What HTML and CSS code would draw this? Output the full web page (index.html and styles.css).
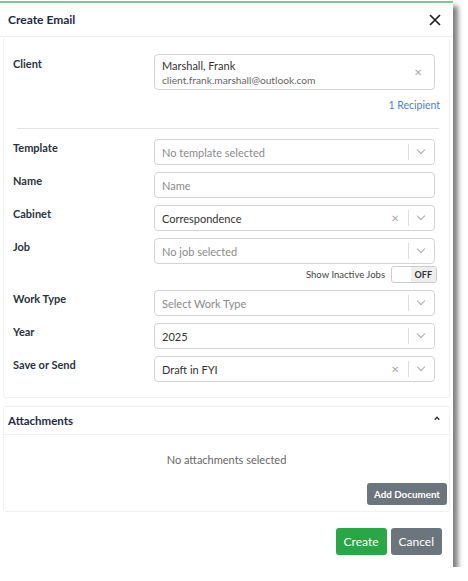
FILE: index.html
```html
<!DOCTYPE html>
<html lang="en">
<head>
    <meta charset="UTF-8">
    <title>Create Email</title>
    <link rel="stylesheet" href="styles.css">
</head>
<body>
    <div class="dialog">
        <header class="head">
            <h1>Create Email</h1>
            <span class="close">
                <svg width="12" height="12" viewBox="0 0 12 12"><path d="M1 1L11 11M11 1L1 11" stroke="#222" stroke-width="1.7"/></svg>
            </span>
        </header>

        <section class="card form">
            <div class="row client-row">
                <label>Client</label>
                <div class="field">
                    <div class="box client">
                        <div>
                            <div class="val">Marshall, Frank</div>
                            <div class="mail">client.frank.marshall@outlook.com</div>
                        </div>
                        <span class="x">&#x2715;</span>
                    </div>
                    <div class="recip">1 Recipient</div>
                </div>
            </div>
            <hr>
            <div class="row">
                <label>Template</label>
                <div class="box select"><span class="ph">No template selected</span><span class="ctl"><i class="sep"></i><i class="chev"></i></span></div>
            </div>
            <div class="row">
                <label>Name</label>
                <div class="box"><span class="ph">Name</span></div>
            </div>
            <div class="row">
                <label>Cabinet</label>
                <div class="box select"><span class="val">Correspondence</span><span class="ctl"><span class="x">&#x2715;</span><i class="sep"></i><i class="chev"></i></span></div>
            </div>
            <div class="row">
                <label>Job</label>
                <div class="field">
                    <div class="box select"><span class="ph">No job selected</span><span class="ctl"><i class="sep"></i><i class="chev"></i></span></div>
                    <div class="inactive">Show Inactive Jobs <span class="toggle"><span></span><b>OFF</b></span></div>
                </div>
            </div>
            <div class="row">
                <label>Work Type</label>
                <div class="box select"><span class="ph">Select Work Type</span><span class="ctl"><i class="sep"></i><i class="chev"></i></span></div>
            </div>
            <div class="row">
                <label>Year</label>
                <div class="box select"><span class="val">2025</span><span class="ctl"><i class="sep"></i><i class="chev"></i></span></div>
            </div>
            <div class="row">
                <label>Save or Send</label>
                <div class="box select"><span class="val">Draft in FYI</span><span class="ctl"><span class="x">&#x2715;</span><i class="sep"></i><i class="chev"></i></span></div>
            </div>
        </section>

        <section class="card attach">
            <div class="attach-head">
                <h2>Attachments</h2>
                <svg class="caret" width="6" height="5" viewBox="0 0 6 5"><path d="M0.7 3.8L3 1.3L5.3 3.8" fill="none" stroke="#333" stroke-width="1.4"/></svg>
            </div>
            <div class="attach-body">
                <p>No attachments selected</p>
                <div class="attach-foot"><button class="btn grey small">Add Document</button></div>
            </div>
        </section>

        <footer class="foot">
            <button class="btn green">Create</button>
            <button class="btn grey">Cancel</button>
        </footer>
    </div>
</body>
</html>
```

FILE: styles.css
```css
*{
    margin: 0;
    padding: 0;
    box-sizing: border-box;
}
body
{
    background: #fff;
    font-family: Lato, "Open Sans", sans-serif;
    font-size: 11px;
    color: #333;
}
.dialog
{
    width: 453px;
    margin-top: 1px;
    background: #fff;
    border-top: 2px solid #7cc796;
    box-shadow: 5px 5px 5px rgba(0, 0, 0, 0.5);
    padding-bottom: 12px;
}
.head
{
    height: 34px;
    display: flex;
    align-items: center;
    justify-content: space-between;
    padding: 0 10px 0 8px;
    border-bottom: 1px solid #eee;
}
h1, h2
{
    font-size: 12px;
    font-weight: 700;
    color: #1f2b45;
}
h2
{
    font-size: 11.5px;
}
.close
{
    display: flex;
    margin-right: 2px;
}
.card
{
    margin: 0 3px;
    border: 1px solid #f0f0f0;
    border-top: none;
    border-radius: 3px;
}
.form
{
    padding: 17px 14px 15px 9px;
    display: flex;
    flex-direction: column;
    gap: 7px;
}
.row
{
    display: grid;
    grid-template-columns: 141px 1fr;
}
.row label
{
    font-weight: 700;
    font-size: 11px;
    color: #2c3340;
    padding-top: 2px;
}
.client-row label
{
    padding-top: 3px;
}
.box
{
    height: 26px;
    border: 1px solid #d3d3d3;
    border-radius: 4px;
    display: flex;
    align-items: center;
    justify-content: space-between;
    padding: 0 0 0 7px;
}
.client
{
    height: 36px;
    padding: 0 12px 0 7px;
}
.client .val
{
    line-height: 15px;
}
.mail
{
    color: #666;
    font-size: 10.2px;
    line-height: 14px;
}
.ph
{
    color: #8a8a8a;
}
.x
{
    color: #aaa;
    font-size: 10px;
}
.ctl
{
    display: flex;
    align-items: center;
    height: 100%;
}
.ctl .x
{
    margin-right: 9px;
}
.sep
{
    width: 1px;
    height: 16px;
    background: #ddd;
}
.chev
{
    width: 6px;
    height: 6px;
    border-right: 1px solid #aaa;
    border-bottom: 1px solid #aaa;
    transform: rotate(45deg);
    margin: -4px 10px 0 9px;
}
.recip
{
    text-align: right;
    color: #4a7de0;
    font-size: 10.5px;
    line-height: 14px;
    margin: 8px -5px 0 0;
}
hr
{
    border: none;
    border-top: 1px solid #e3e3e3;
    margin: 9px -4px 3px 4px;
}
.inactive
{
    display: flex;
    justify-content: flex-end;
    align-items: center;
    gap: 6px;
    font-size: 9.5px;
    color: #444;
    margin: 2px -2px 0 0;
}
.toggle
{
    display: flex;
    width: 46px;
    height: 17px;
    border: 1px solid #ccc;
    border-radius: 3px;
    overflow: hidden;
}
.toggle span
{
    flex: 1;
}
.toggle b
{
    background: #eee;
    font-size: 9px;
    font-weight: 700;
    color: #333;
    padding: 0 4px;
    line-height: 15px;
}
.attach
{
    margin-top: 8px;
    border-top: 1px solid #f0f0f0;
}
.attach-head
{
    height: 28px;
    display: flex;
    align-items: center;
    justify-content: space-between;
    padding: 0 9px 0 4px;
    border-bottom: 1px solid #eee;
}
.caret
{
    margin-top: -4px;
}
.attach-body p
{
    text-align: center;
    color: #666;
    line-height: 14px;
    padding: 18px 0 16px;
}
.attach-foot
{
    display: flex;
    justify-content: flex-end;
    padding: 0 2px 6px 0;
}
.btn
{
    border: none;
    border-radius: 3px;
    color: #fff;
    font-family: Lato, sans-serif;
    font-size: 12px;
    height: 27px;
    padding: 0 8px;
}
.small
{
    height: 22px;
    font-size: 9.8px;
    font-weight: 700;
    padding: 0 7px;
}
.grey
{
    background: #6c757d;
}
.green
{
    background: #28a745;
}
.foot
{
    display: flex;
    justify-content: flex-end;
    gap: 4px;
    padding: 16px 11px 0 0;
}
```
